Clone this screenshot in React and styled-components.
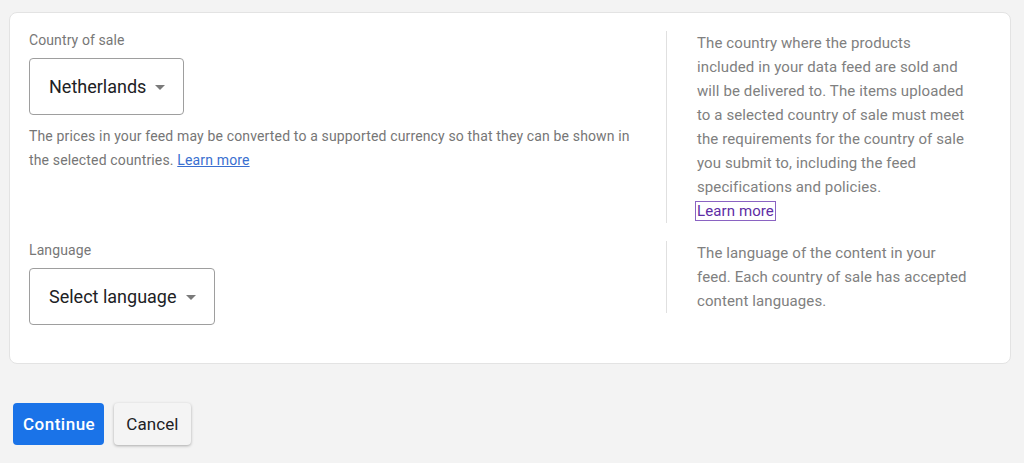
import React from 'react';
import styled, { createGlobalStyle } from 'styled-components';

const GlobalStyle = createGlobalStyle`
  html, body {
    margin: 0;
    padding: 0;
    background: #f3f3f3;
  }
  body {
    font-family: Roboto, "Liberation Sans", Arial, sans-serif;
    color: #202124;
  }
`;

const Page = styled.div`
  padding: 12px 13px 20px 9px;
`;

const Card = styled.section`
  background: #fff;
  border: 1px solid #e3e3e3;
  border-radius: 8px;
  padding: 19px 20px 0 19px;
`;

const Row = styled.div`
  display: grid;
  grid-template-columns: 1fr 324px;
  align-items: start;
  margin-bottom: 19px;
  &:last-child {
    margin-bottom: 38px;
  }
`;

const Field = styled.div`
  padding-right: 30px;
`;

const Label = styled.div`
  font-size: 14px;
  line-height: 16px;
  letter-spacing: 0.1px;
  color: #777;
  margin-bottom: 10px;
`;

const Select = styled.button`
  display: inline-flex;
  align-items: center;
  gap: 9px;
  height: 57px;
  padding: 0 18px 0 19px;
  background: #fff;
  border: 1px solid #9e9e9e;
  border-radius: 4px;
  font-family: inherit;
  font-size: 18px;
  color: #202124;
  cursor: pointer;
`;

const Caret = styled.span`
  width: 0;
  height: 0;
  border-left: 5px solid transparent;
  border-right: 5px solid transparent;
  border-top: 5px solid #7a7a7a;
  margin-top: 2px;
`;

const Help = styled.p`
  margin: 9px 0 0;
  font-size: 14px;
  line-height: 24px;
  letter-spacing: 0.15px;
  color: #767676;
`;

const Link = styled.a`
  color: ${p => (p.$visited ? '#5e2ca5' : '#3a6fd0')};
  text-decoration: ${p => (p.$visited ? 'none' : 'underline')};
  ${p => p.$visited && `
    outline: 1px solid #8a63c2;
    outline-offset: 0;
    display: inline-block;
    line-height: 18px;
    margin-left: -1px;
    padding: 0 1px;
  `}
  cursor: pointer;
`;

const Aside = styled.aside`
  border-left: 1px solid #e0e0e0;
  padding: 0 20px 0 30px;
  font-size: 15px;
  line-height: 24px;
  letter-spacing: 0.1px;
  color: #808080;
  margin-top: -1px;
`;

const Actions = styled.div`
  display: flex;
  gap: 10px;
  margin: 39px 0 0 4px;
`;

const Button = styled.button`
  height: 42px;
  padding: 0 ${p => (p.$primary ? '9px 0 10px' : '12px')};
  border: none;
  border-radius: 4px;
  font-family: inherit;
  font-size: 17px;
  letter-spacing: ${p => (p.$primary ? '0.5px' : '0.1px')};
  font-weight: ${p => (p.$primary ? 500 : 400)};
  color: ${p => (p.$primary ? '#fff' : '#202124')};
  background: ${p => (p.$primary ? '#1a73e8' : '#f4f4f4')};
  box-shadow: ${p => (p.$primary ? 'none' : '0 1px 3px rgba(0,0,0,0.3)')};
  cursor: pointer;
`;

export default function App() {
  return (
    <>
      <GlobalStyle />
      <Page>
        <Card>
          <Row>
            <Field>
              <Label>Country of sale</Label>
              <Select>Netherlands <Caret /></Select>
              <Help>
                The prices in your feed may be converted to a supported currency so that they can be shown in
                the selected countries. <Link>Learn more</Link>
              </Help>
            </Field>
            <Aside>
              The country where the products included in your data feed are sold and will be delivered to.
              The items uploaded to a selected country of sale must meet the requirements for the country of
              sale you submit to, including the feed specifications and policies.
              <br />
              <Link $visited>Learn more</Link>
            </Aside>
          </Row>
          <Row>
            <Field>
              <Label>Language</Label>
              <Select>Select language <Caret /></Select>
            </Field>
            <Aside>
              The language of the content in your feed. Each country of sale has accepted content languages.
            </Aside>
          </Row>
        </Card>
        <Actions>
          <Button $primary>Continue</Button>
          <Button>Cancel</Button>
        </Actions>
      </Page>
    </>
  );
}
